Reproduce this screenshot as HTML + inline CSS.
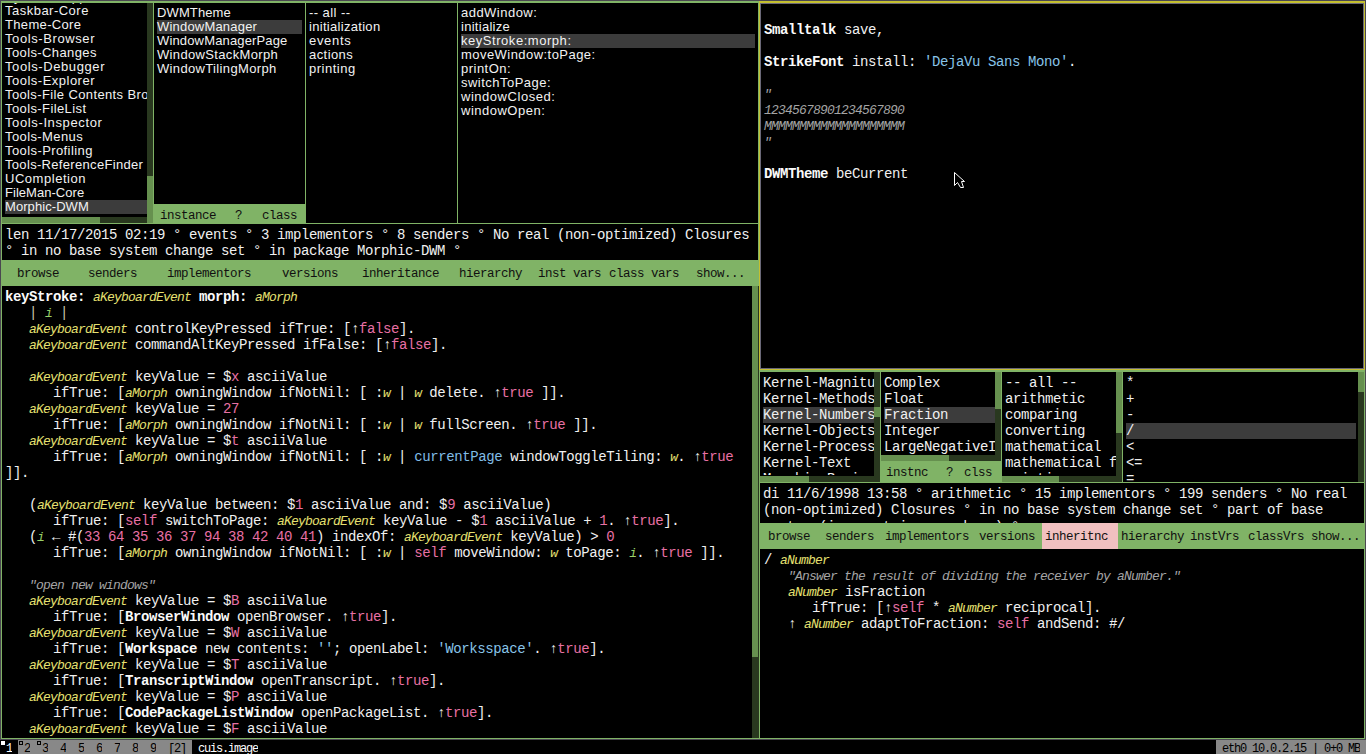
<!DOCTYPE html>
<html><head><meta charset="utf-8"><style>
*{margin:0;padding:0}
html,body{width:1366px;height:754px;overflow:hidden;background:#000}
div{position:absolute}
.p{font-family:"Liberation Sans",sans-serif;font-size:13px;line-height:14px;white-space:pre;height:14px}
.m{font-family:"Liberation Mono",monospace;font-size:14px;letter-spacing:-0.4px;line-height:16px;white-space:pre;color:#f0f0f0;height:16px}
.btn{font-family:"Liberation Mono",monospace;font-size:12.5px;letter-spacing:-0.5px;line-height:16px;white-space:pre;height:16px}
.b{font-weight:bold;color:#fafafa}
.i{font-style:italic;font-size:13px;letter-spacing:-0.8px;color:#e6e070}
.g{font-style:italic;font-size:13px;letter-spacing:-0.8px;color:#98d068}
.c{font-style:italic;font-size:13px;letter-spacing:-0.8px;color:#a4a4a4}
.k{color:#e870a4}
.s{color:#88c4e8}
.v{color:#80bce6}
.r{color:#c8c8b0}
.bar{top:742px;height:12px;overflow:hidden;font-family:"Liberation Mono",monospace;font-size:12px;line-height:15px;letter-spacing:-1.2px;white-space:pre}
</style></head><body>
<div style="left:0px;top:0px;width:1366px;height:740px;background:#4a4850"></div>
<div style="left:1px;top:1px;width:758px;height:738px;background:#80b366"></div>
<div style="left:2px;top:3px;width:145px;height:214px;background:#000"></div>
<div style="left:147px;top:3px;width:6px;height:220px;background:#29381f"></div>
<div style="left:147px;top:176px;width:6px;height:47px;background:#66904f"></div>
<div style="left:2px;top:217px;width:145px;height:6px;background:#29381f"></div>
<div style="left:2px;top:217px;width:98px;height:6px;background:#66904f"></div>
<div style="left:2px;top:3px;width:145px;height:214px;overflow:hidden">
<div style="left:3px;top:197px;width:142px;height:14px;background:#3c3c3c"></div>
<div class="p" style="left:3px;top:-13px;letter-spacing:0.343px;color:#f2f2f2">System-Support</div>
<div class="p" style="left:3px;top:1px;letter-spacing:0.487px;color:#f2f2f2">Taskbar-Core</div>
<div class="p" style="left:3px;top:15px;letter-spacing:0.337px;color:#f2f2f2">Theme-Core</div>
<div class="p" style="left:3px;top:29px;letter-spacing:0.594px;color:#f2f2f2">Tools-Browser</div>
<div class="p" style="left:3px;top:43px;letter-spacing:0.389px;color:#f2f2f2">Tools-Changes</div>
<div class="p" style="left:3px;top:57px;letter-spacing:0.593px;color:#f2f2f2">Tools-Debugger</div>
<div class="p" style="left:3px;top:71px;letter-spacing:0.492px;color:#f2f2f2">Tools-Explorer</div>
<div class="p" style="left:3px;top:85px;letter-spacing:0.380px;color:#f2f2f2">Tools-File Contents Browser</div>
<div class="p" style="left:3px;top:99px;letter-spacing:0.399px;color:#f2f2f2">Tools-FileList</div>
<div class="p" style="left:3px;top:113px;letter-spacing:0.619px;color:#f2f2f2">Tools-Inspector</div>
<div class="p" style="left:3px;top:127px;letter-spacing:0.402px;color:#f2f2f2">Tools-Menus</div>
<div class="p" style="left:3px;top:141px;letter-spacing:0.410px;color:#f2f2f2">Tools-Profiling</div>
<div class="p" style="left:3px;top:155px;letter-spacing:0.321px;color:#f2f2f2">Tools-ReferenceFinder</div>
<div class="p" style="left:3px;top:169px;letter-spacing:0.534px;color:#f2f2f2">UCompletion</div>
<div class="p" style="left:3px;top:183px;letter-spacing:0.036px;color:#f2f2f2">FileMan-Core</div>
<div class="p" style="left:3px;top:197px;letter-spacing:0.073px;color:#f2f2f2">Morphic-DWM</div>
</div>
<div style="left:154px;top:3px;width:151px;height:201px;background:#000"></div>
<div style="left:157px;top:20px;width:145px;height:14px;background:#3c3c3c"></div>
<div class="p" style="left:157px;top:6px;letter-spacing:0.122px;color:#f2f2f2">DWMTheme</div>
<div class="p" style="left:157px;top:20px;letter-spacing:0.195px;color:#f2f2f2">WindowManager</div>
<div class="p" style="left:157px;top:34px;letter-spacing:0.152px;color:#f2f2f2">WindowManagerPage</div>
<div class="p" style="left:157px;top:48px;letter-spacing:0.339px;color:#f2f2f2">WindowStackMorph</div>
<div class="p" style="left:157px;top:62px;letter-spacing:0.347px;color:#f2f2f2">WindowTilingMorph</div>
<div class="btn" style="left:160px;top:208px;color:#101010">instance</div>
<div class="btn" style="left:235px;top:208px;color:#101010">?</div>
<div class="btn" style="left:262px;top:208px;color:#101010">class</div>
<div style="left:306px;top:3px;width:151px;height:220px;background:#000"></div>
<div class="p" style="left:309px;top:6px;letter-spacing:0.447px;color:#f2f2f2">-- all --</div>
<div class="p" style="left:309px;top:20px;letter-spacing:0.301px;color:#f2f2f2">initialization</div>
<div class="p" style="left:309px;top:34px;letter-spacing:0.672px;color:#f2f2f2">events</div>
<div class="p" style="left:309px;top:48px;letter-spacing:0.432px;color:#f2f2f2">actions</div>
<div class="p" style="left:309px;top:62px;letter-spacing:0.498px;color:#f2f2f2">printing</div>
<div style="left:458px;top:3px;width:300px;height:220px;background:#000"></div>
<div style="left:461px;top:34px;width:294px;height:14px;background:#3c3c3c"></div>
<div class="p" style="left:461px;top:6px;letter-spacing:0.474px;color:#f2f2f2">addWindow:</div>
<div class="p" style="left:461px;top:20px;letter-spacing:0.282px;color:#f2f2f2">initialize</div>
<div class="p" style="left:461px;top:34px;letter-spacing:0.542px;color:#f2f2f2">keyStroke:morph:</div>
<div class="p" style="left:461px;top:48px;letter-spacing:0.452px;color:#f2f2f2">moveWindow:toPage:</div>
<div class="p" style="left:461px;top:62px;letter-spacing:0.477px;color:#f2f2f2">printOn:</div>
<div class="p" style="left:461px;top:76px;letter-spacing:0.483px;color:#f2f2f2">switchToPage:</div>
<div class="p" style="left:461px;top:90px;letter-spacing:0.531px;color:#f2f2f2">windowClosed:</div>
<div class="p" style="left:461px;top:104px;letter-spacing:0.503px;color:#f2f2f2">windowOpen:</div>
<div style="left:2px;top:224px;width:756px;height:36px;background:#000"></div>
<div style="left:2px;top:224px;width:756px;height:36px;overflow:hidden">
<div class="m" style="left:3px;top:3px">len 11/17/2015 02:19 ° events ° 3 implementors ° 8 senders ° No real (non-optimized) Closures</div>
<div class="m" style="left:3px;top:19px">° in no base system change set ° in package Morphic-DWM °</div>
</div>
<div class="btn" style="left:17px;top:266px;color:#101010">browse</div>
<div class="btn" style="left:88px;top:266px;color:#101010">senders</div>
<div class="btn" style="left:167px;top:266px;color:#101010">implementors</div>
<div class="btn" style="left:282px;top:266px;color:#101010">versions</div>
<div class="btn" style="left:362px;top:266px;color:#101010">inheritance</div>
<div class="btn" style="left:459px;top:266px;color:#101010">hierarchy</div>
<div class="btn" style="left:538px;top:266px;color:#101010">inst vars</div>
<div class="btn" style="left:609px;top:266px;color:#101010">class vars</div>
<div class="btn" style="left:696px;top:266px;color:#101010">show...</div>
<div style="left:2px;top:286px;width:750px;height:452px;background:#000"></div>
<div style="left:752px;top:286px;width:7px;height:452px;background:#29381f"></div>
<div style="left:752px;top:286px;width:7px;height:371px;background:#66904f"></div>
<div style="left:758px;top:286px;width:1px;height:452px;background:#29381f"></div>
<div style="left:2px;top:286px;width:750px;height:452px;overflow:hidden">
<div class="m" style="left:3px;top:3px"><span class="b">keyStroke: </span><span class="i">aKeyboardEvent</span> <span class="b">morph: </span><span class="i">aMorph</span></div>
<div class="m" style="left:3px;top:19px">   <span class="r">| </span><span class="g">i</span><span class="r"> |</span></div>
<div class="m" style="left:3px;top:35px">   <span class="i">aKeyboardEvent</span> controlKeyPressed ifTrue: [↑<span class="k">false</span>].</div>
<div class="m" style="left:3px;top:51px">   <span class="i">aKeyboardEvent</span> commandAltKeyPressed ifFalse: [↑<span class="k">false</span>].</div>
<div class="m" style="left:3px;top:83px">   <span class="i">aKeyboardEvent</span> keyValue = $<span class="k">x</span> asciiValue</div>
<div class="m" style="left:3px;top:99px">      ifTrue: [<span class="i">aMorph</span> owningWindow ifNotNil: [ :<span class="i">w</span> | <span class="i">w</span> delete. ↑<span class="k">true</span> ]].</div>
<div class="m" style="left:3px;top:115px">   <span class="i">aKeyboardEvent</span> keyValue = <span class="k">27</span></div>
<div class="m" style="left:3px;top:131px">      ifTrue: [<span class="i">aMorph</span> owningWindow ifNotNil: [ :<span class="i">w</span> | <span class="i">w</span> fullScreen. ↑<span class="k">true</span> ]].</div>
<div class="m" style="left:3px;top:147px">   <span class="i">aKeyboardEvent</span> keyValue = $<span class="k">t</span> asciiValue</div>
<div class="m" style="left:3px;top:163px">      ifTrue: [<span class="i">aMorph</span> owningWindow ifNotNil: [ :<span class="i">w</span> | <span class="v">currentPage</span> windowToggleTiling: <span class="i">w</span>. ↑<span class="k">true</span></div>
<div class="m" style="left:3px;top:179px">]].</div>
<div class="m" style="left:3px;top:211px">   (<span class="i">aKeyboardEvent</span> keyValue between: $<span class="k">1</span> asciiValue and: $<span class="k">9</span> asciiValue)</div>
<div class="m" style="left:3px;top:227px">      ifTrue: [<span class="k">self</span> switchToPage: <span class="i">aKeyboardEvent</span> keyValue - $<span class="k">1</span> asciiValue + <span class="k">1</span>. ↑<span class="k">true</span>].</div>
<div class="m" style="left:3px;top:243px">   (<span class="g">i</span> ← #(<span class="k">33 64 35 36 37 94 38 42 40 41</span>) indexOf: <span class="i">aKeyboardEvent</span> keyValue) &gt; <span class="k">0</span></div>
<div class="m" style="left:3px;top:259px">      ifTrue: [<span class="i">aMorph</span> owningWindow ifNotNil: [ :<span class="i">w</span> | <span class="k">self</span> moveWindow: <span class="i">w</span> toPage: <span class="g">i</span>. ↑<span class="k">true</span> ]].</div>
<div class="m" style="left:3px;top:291px">   <span class="c">"open new windows"</span></div>
<div class="m" style="left:3px;top:307px">   <span class="i">aKeyboardEvent</span> keyValue = $<span class="k">B</span> asciiValue</div>
<div class="m" style="left:3px;top:323px">      ifTrue: [<span class="b">BrowserWindow</span> openBrowser. ↑<span class="k">true</span>].</div>
<div class="m" style="left:3px;top:339px">   <span class="i">aKeyboardEvent</span> keyValue = $<span class="k">W</span> asciiValue</div>
<div class="m" style="left:3px;top:355px">      ifTrue: [<span class="b">Workspace</span> new contents: <span class="s">''</span>; openLabel: <span class="s">'Worksspace'</span>. ↑<span class="k">true</span>].</div>
<div class="m" style="left:3px;top:371px">   <span class="i">aKeyboardEvent</span> keyValue = $<span class="k">T</span> asciiValue</div>
<div class="m" style="left:3px;top:387px">      ifTrue: [<span class="b">TranscriptWindow</span> openTranscript. ↑<span class="k">true</span>].</div>
<div class="m" style="left:3px;top:403px">   <span class="i">aKeyboardEvent</span> keyValue = $<span class="k">P</span> asciiValue</div>
<div class="m" style="left:3px;top:419px">      ifTrue: [<span class="b">CodePackageListWindow</span> openPackageList. ↑<span class="k">true</span>].</div>
<div class="m" style="left:3px;top:435px">   <span class="i">aKeyboardEvent</span> keyValue = $<span class="k">F</span> asciiValue</div>
</div>
<div style="left:759px;top:1px;width:606px;height:369px;background:#c4c030"></div>
<div style="left:760px;top:3px;width:604px;height:366px;background:#6a6878"></div>
<div style="left:761px;top:4px;width:602px;height:364px;background:#000"></div>
<div class="m" style="left:764px;top:22px"><span class="b">Smalltalk</span> save,</div>
<div class="m" style="left:764px;top:54px"><span class="b">StrikeFont</span> install: <span class="s">'DejaVu Sans Mono'</span>.</div>
<div class="m" style="left:764px;top:86px"><span class="c">"</span></div>
<div class="m" style="left:764px;top:102px"><span class="c">12345678901234567890</span></div>
<div class="m" style="left:764px;top:118px"><span class="c">MMMMMMMMMMMMMMMMMMMM</span></div>
<div class="m" style="left:764px;top:134px"><span class="c">"</span></div>
<div class="m" style="left:764px;top:166px"><span class="b">DWMTheme</span> beCurrent</div>
<svg style="position:absolute;left:950px;top:168px" width="24" height="24" viewBox="0 0 24 24"><path d="M4.5 4.5 L4.5 17.5 L7.5 14.5 L10.5 19.5 L13.5 19.5 L11.5 13.5 L14.5 13.5 Z" fill="#000" stroke="#fff" stroke-width="1"/></svg>
<div style="left:759px;top:370px;width:606px;height:369px;background:#80b366"></div>
<div style="left:760px;top:372px;width:114px;height:104px;background:#000"></div>
<div style="left:760px;top:372px;width:114px;height:103px;overflow:hidden">
<div style="left:3px;top:35px;width:111px;height:16px;background:#3c3c3c"></div>
<div class="m" style="left:3px;top:3px">Kernel-Magnitudes</div>
<div class="m" style="left:3px;top:19px">Kernel-Methods</div>
<div class="m" style="left:3px;top:35px">Kernel-Numbers</div>
<div class="m" style="left:3px;top:51px">Kernel-Objects</div>
<div class="m" style="left:3px;top:67px">Kernel-Processes</div>
<div class="m" style="left:3px;top:83px">Kernel-Text</div>
<div class="m" style="left:3px;top:99px">Morphic-Basic</div>
</div>
<div style="left:874px;top:372px;width:6px;height:110px;background:#29381f"></div>
<div style="left:874px;top:407px;width:6px;height:10px;background:#66904f"></div>
<div style="left:760px;top:476px;width:114px;height:6px;background:#29381f"></div>
<div style="left:760px;top:476px;width:49px;height:6px;background:#66904f"></div>
<div style="left:874px;top:476px;width:6px;height:6px;background:#29381f"></div>
<div style="left:881px;top:372px;width:114px;height:83px;background:#000"></div>
<div style="left:881px;top:372px;width:114px;height:83px;overflow:hidden">
<div style="left:3px;top:35px;width:111px;height:16px;background:#3c3c3c"></div>
<div class="m" style="left:3px;top:3px">Complex</div>
<div class="m" style="left:3px;top:19px">Float</div>
<div class="m" style="left:3px;top:35px">Fraction</div>
<div class="m" style="left:3px;top:51px">Integer</div>
<div class="m" style="left:3px;top:67px">LargeNegativeInteger</div>
<div class="m" style="left:3px;top:83px">LargePositiveInteger</div>
</div>
<div style="left:995px;top:372px;width:6px;height:89px;background:#29381f"></div>
<div style="left:995px;top:372px;width:6px;height:37px;background:#66904f"></div>
<div style="left:881px;top:455px;width:120px;height:6px;background:#29381f"></div>
<div style="left:881px;top:455px;width:68px;height:6px;background:#66904f"></div>
<div class="btn" style="left:886px;top:465px;color:#101010">instnc</div>
<div class="btn" style="left:946px;top:465px;color:#101010">?</div>
<div class="btn" style="left:964px;top:465px;color:#101010">clss</div>
<div style="left:1002px;top:372px;width:114px;height:104px;background:#000"></div>
<div style="left:1002px;top:372px;width:114px;height:103px;overflow:hidden">
<div class="m" style="left:3px;top:3px">-- all --</div>
<div class="m" style="left:3px;top:19px">arithmetic</div>
<div class="m" style="left:3px;top:35px">comparing</div>
<div class="m" style="left:3px;top:51px">converting</div>
<div class="m" style="left:3px;top:67px">mathematical</div>
<div class="m" style="left:3px;top:83px">mathematical functions</div>
<div class="m" style="left:3px;top:99px">printing</div>
</div>
<div style="left:1116px;top:372px;width:6px;height:110px;background:#29381f"></div>
<div style="left:1116px;top:372px;width:6px;height:61px;background:#66904f"></div>
<div style="left:1002px;top:476px;width:120px;height:6px;background:#29381f"></div>
<div style="left:1002px;top:476px;width:57px;height:6px;background:#66904f"></div>
<div style="left:1123px;top:372px;width:235px;height:110px;background:#000"></div>
<div style="left:1123px;top:372px;width:235px;height:110px;overflow:hidden">
<div style="left:3px;top:51px;width:230px;height:16px;background:#3c3c3c"></div>
<div class="m" style="left:3px;top:3px">*</div>
<div class="m" style="left:3px;top:19px">+</div>
<div class="m" style="left:3px;top:35px">-</div>
<div class="m" style="left:3px;top:51px">/</div>
<div class="m" style="left:3px;top:67px">&lt;</div>
<div class="m" style="left:3px;top:83px">&lt;=</div>
<div class="m" style="left:3px;top:99px">=</div>
</div>
<div style="left:1358px;top:372px;width:6px;height:110px;background:#29381f"></div>
<div style="left:1358px;top:372px;width:6px;height:20px;background:#66904f"></div>
<div style="left:760px;top:483px;width:604px;height:40px;background:#000"></div>
<div style="left:760px;top:483px;width:604px;height:40px;overflow:hidden">
<div class="m" style="left:3px;top:3px">di 11/6/1998 13:58 ° arithmetic ° 15 implementors ° 199 senders ° No real</div>
<div class="m" style="left:3px;top:19px">(non-optimized) Closures ° in no base system change set ° part of base</div>
<div class="m" style="left:3px;top:36px">system (i.e. not in a package) °</div>
</div>
<div style="left:1042px;top:523px;width:76px;height:26px;background:#f0c0c0"></div>
<div class="btn" style="left:768px;top:529px;color:#101010">browse</div>
<div class="btn" style="left:825px;top:529px;color:#101010">senders</div>
<div class="btn" style="left:885px;top:529px;color:#101010">implementors</div>
<div class="btn" style="left:979px;top:529px;color:#101010">versions</div>
<div class="btn" style="left:1045px;top:529px;color:#101010">inheritnc</div>
<div class="btn" style="left:1121px;top:529px;color:#101010">hierarchy</div>
<div class="btn" style="left:1190px;top:529px;color:#101010">instVrs</div>
<div class="btn" style="left:1248px;top:529px;color:#101010">classVrs</div>
<div class="btn" style="left:1311px;top:529px;color:#101010">show...</div>
<div style="left:760px;top:549px;width:604px;height:189px;background:#000"></div>
<div class="m" style="left:764px;top:552px">/ <span class="i">aNumber</span></div>
<div class="m" style="left:764px;top:568px">   <span class="c">"Answer the result of dividing the receiver by aNumber."</span></div>
<div class="m" style="left:764px;top:584px">   <span class="i">aNumber</span> isFraction</div>
<div class="m" style="left:764px;top:600px">      ifTrue: [↑<span class="k">self</span> * <span class="i">aNumber</span> reciprocal].</div>
<div class="m" style="left:764px;top:616px">   ↑ <span class="i">aNumber</span> adaptToFraction: <span class="k">self</span> andSend: #/</div>
<div style="left:0px;top:740px;width:1366px;height:14px;background:#000"></div>
<div style="left:18px;top:740px;width:174px;height:14px;background:#888"></div>
<div style="left:1216px;top:740px;width:150px;height:14px;background:#888"></div>
<div style="left:1px;top:741px;width:4px;height:4px;background:#fff"></div>
<div style="left:19px;top:741px;width:4px;height:4px;background:#000"></div>
<div style="left:20px;top:742px;width:2px;height:2px;background:#888"></div>
<div style="left:37px;top:741px;width:4px;height:4px;background:#000"></div>
<div style="left:38px;top:742px;width:2px;height:2px;background:#888"></div>
<div class="bar" style="left:6px;color:#fff">1</div>
<div class="bar" style="left:24px;color:#000">2</div>
<div class="bar" style="left:42px;color:#000">3</div>
<div class="bar" style="left:60px;color:#000">4</div>
<div class="bar" style="left:78px;color:#000">5</div>
<div class="bar" style="left:96px;color:#000">6</div>
<div class="bar" style="left:114px;color:#000">7</div>
<div class="bar" style="left:132px;color:#000">8</div>
<div class="bar" style="left:150px;color:#000">9</div>
<div class="bar" style="left:168px;color:#000">[2]</div>
<div class="bar" style="left:198px;color:#fff">cuis.image</div>
<div class="bar" style="left:1222px;color:#000">eth0 10.0.2.15 | 0+0 MB</div>
</body></html>
